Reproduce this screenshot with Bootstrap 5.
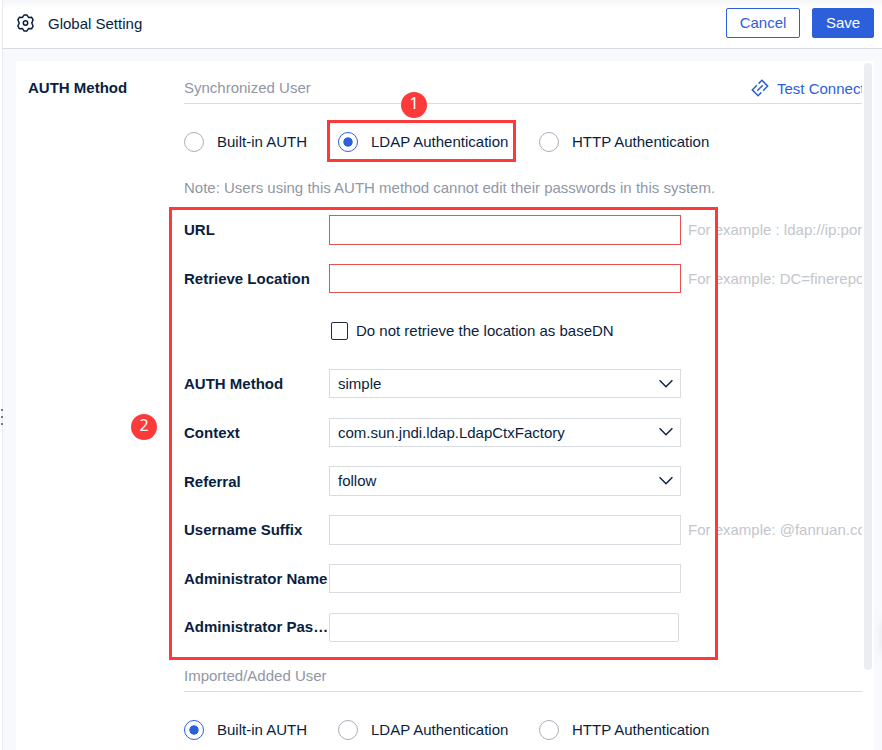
<!DOCTYPE html>
<html lang="en">
<head>
<meta charset="utf-8">
<meta name="viewport" content="width=device-width, initial-scale=1">
<title>Global Setting</title>
<link href="https://cdn.jsdelivr.net/npm/bootstrap@5.3.0/dist/css/bootstrap.min.css" rel="stylesheet">
<style>
body{font:15px/20px "Liberation Sans",Arial,sans-serif;color:#091e40;background:#fff;height:750px}
.shell{height:750px;margin-left:2px;border-left:1px solid #e9eaf0;background:#f8f9fd}
.topbar{height:49px;border-bottom:1px solid #d9dbe3;background:linear-gradient(#f5f6f8,#fff 9px);padding:0 8px 2px 13px}
.topbar .btn{height:30px;font-size:15px;line-height:20px;padding:4px 0;border-radius:2px}
.page-title{margin-left:13px;padding-top:2px}
.cancel-btn{width:74px;--bs-btn-color:#2c60db;--bs-btn-border-color:#2c60db;--bs-btn-bg:#fff}
.save-btn{width:62px;margin-left:12px;--bs-btn-bg:#2c60db;--bs-btn-border-color:#2c60db}
.panel{margin:12px 8px 0 13px;background:#fff;height:689px}
.side-title{width:168px;padding:17px 0 0 12px;flex:none}
.main-col{width:678px;flex:none;overflow:hidden;padding-top:17px}
.section-head{height:26px;border-bottom:1px solid #d9dbe3;color:#9097a5}
.section-head>*{white-space:nowrap}
.test-link{color:#2c60db;text-decoration:none;width:111px;flex:none;padding-top:1px}
.radio-row{margin-top:28px;height:20px}
.option{gap:13px;white-space:nowrap}
.option:nth-child(1){width:154px}
.option:nth-child(2){width:201px}
.option .form-check-input,.base-dn .form-check-input{margin:0;flex:none;box-shadow:none}
.option .form-check-input{width:20px;height:20px;border:1px solid #a9afbc}
.option .form-check-input:checked{background:radial-gradient(circle,#2c60db 4.3px,#fff 5px);border-color:#2c60db}
.note{color:#9097a5;margin-top:26px;white-space:nowrap}
.fields{display:grid;grid-template-columns:145px 352px 1fr;grid-template-rows:49px 49px 56px 49px 48px 49px 49px 49px 30px;margin-top:17px;align-items:start}
.fields label.name{font-weight:700;line-height:30px;white-space:nowrap;overflow:hidden;text-overflow:ellipsis}
.fields label.lower{line-height:32px}
.fields label.upper{line-height:28px}
.fields .box{height:29px;border:1px solid #d9dbe3;border-radius:0;padding:0 7px 0 8px;font:15px/27px "Liberation Sans",Arial,sans-serif;color:#091e40;background:#fff;box-shadow:none}
.fields .tall{height:30px}
.fields .bad{border-color:#e65251}
.fields .short{width:350px;border-radius:2px}
.fields .hint{color:#c3c6cd;line-height:30px;padding-left:7px;white-space:nowrap}
.base-dn{grid-column:2/4;padding:8px 0 0 2px;gap:8px}
.base-dn .form-check-input{width:17px;height:18px;border:1px solid #1a2c4c;border-radius:2px;position:relative;top:1px}
.second{margin-top:23px}
.scroller{width:8px;height:607px;margin:2px 2px 0 auto;border-radius:4px;background:#ecedf2}
.frame{position:absolute;border:3px solid #fc3a39;pointer-events:none}
.frame-a{left:327px;top:120px;width:189px;height:42px}
.frame-b{left:169px;top:207px;width:549px;height:453px}
.pin{position:absolute;width:26px;height:26px;border-radius:50%;background:#fc3a39;color:#fff;font:16px/23px "Noto Sans",sans-serif;text-align:center}
.pin-a{left:401px;top:92px}
.pin-b{left:131px;top:414px}
.grip{position:absolute;left:0;top:408px}
.edge{position:absolute;right:0;top:600px;width:12px;height:75px;overflow:hidden}
.edge::after{content:"";position:absolute;left:12px;top:20px;width:20px;height:35px;border-radius:10px;box-shadow:0 0 10px #9da3b340}
</style>
</head>
<body class="position-relative overflow-hidden">
<div class="shell">
  <header class="topbar d-flex align-items-center">
    <svg width="19" height="20" viewBox="0 0 19 20" fill="none" stroke="#091e40" stroke-width="1.5" stroke-linejoin="round"><path d="M8.200 1.900h2.600L12.500 4.400l3.200-.1 1.400 2.500L15.800 10l1.300 3.200-1.400 2.500-3.200-.1-1.700 2.500H8.200l-1.700-2.500-3.200.1-1.400-2.500L3.200 10 1.900 6.800l1.400-2.500 3.200.1z"/><circle cx="9.500" cy="10" r="2.200"/></svg>
    <span class="page-title me-auto">Global Setting</span>
    <button class="btn btn-outline-primary cancel-btn">Cancel</button>
    <button class="btn btn-primary save-btn">Save</button>
  </header>
  <main class="panel d-flex">
    <div class="side-title fw-bold">AUTH Method</div>
    <div class="main-col">
      <div class="section-head d-flex justify-content-between"><span>Synchronized User</span>
        <a class="test-link d-flex" href="#"><svg class="flex-shrink-0" width="18" height="18" viewBox="0 0 18 18" fill="none" stroke="#2c60db" stroke-width="1.5"><path d="M7.600 4.600 10.900 1.300l5.800 5.800-4.600 4.600M10.400 13.400l-3.300 3.300-5.800-5.800 4.600-4.600M6.200 11.800l5.600-5.600"/></svg><span class="ms-2">Test Connection</span></a></div>
      <div class="radio-row d-flex">
        <label class="option d-flex"><input class="form-check-input" type="radio" name="sync">Built-in AUTH</label>
        <label class="option d-flex"><input class="form-check-input" type="radio" name="sync" checked>LDAP Authentication</label>
        <label class="option d-flex"><input class="form-check-input" type="radio" name="sync">HTTP Authentication</label>
      </div>
      <div class="note">Note: Users using this AUTH method cannot edit their passwords in this system.</div>
      <div class="fields">
        <label class="name">URL</label><input class="form-control box tall bad"><span class="hint">For example : ldap://ip:port</span>
        <label class="name">Retrieve Location</label><input class="form-control box bad"><span class="hint">For example: DC=finereport</span>
        <span></span><label class="base-dn d-flex"><input class="form-check-input" type="checkbox">Do not retrieve the location as baseDN</label>
        <label class="name">AUTH Method</label><div class="box d-flex justify-content-between"><span>simple</span><svg width="14" height="27" viewBox="0 0 14 27" fill="none" stroke="#091e40" stroke-width="1.4"><path d="m.6 10.300 6.400 6.400 6.400-6.400"/></svg></div><span></span>
        <label class="name">Context</label><div class="box d-flex justify-content-between"><span>com.sun.jndi.ldap.LdapCtxFactory</span><svg width="14" height="27" viewBox="0 0 14 27" fill="none" stroke="#091e40" stroke-width="1.4"><path d="m.6 9.300 6.400 6.400 6.400-6.400"/></svg></div><span></span>
        <label class="name lower">Referral</label><div class="box tall d-flex justify-content-between"><span>follow</span><svg width="14" height="27" viewBox="0 0 14 27" fill="none" stroke="#091e40" stroke-width="1.4"><path d="m.6 10.300 6.400 6.400 6.400-6.400"/></svg></div><span></span>
        <label class="name">Username Suffix</label><input class="form-control box tall"><span class="hint">For example: @fanruan.com</span>
        <label class="name">Administrator Name</label><input class="form-control box"><span></span>
        <label class="name upper">Administrator Password</label><input class="form-control box short" type="password"><span></span>
      </div>
      <div class="section-head second">Imported/Added User</div>
      <div class="radio-row d-flex">
        <label class="option d-flex"><input class="form-check-input" type="radio" name="imp" checked>Built-in AUTH</label>
        <label class="option d-flex"><input class="form-check-input" type="radio" name="imp">LDAP Authentication</label>
        <label class="option d-flex"><input class="form-check-input" type="radio" name="imp">HTTP Authentication</label>
      </div>
    </div>
    <div class="scroller"></div>
  </main>
</div>
<svg class="grip" width="4" height="18" viewBox="0 0 4 18" fill="#5d7f9f"><path d="M1 1h2v2H1zM1 8h2v2H1zM1 15h2v2H1z"/></svg>
<div class="edge"></div>
<div class="frame frame-a"></div><div class="frame frame-b"></div>
<div class="pin pin-a">1</div><div class="pin pin-b">2</div>
<script src="https://cdn.jsdelivr.net/npm/bootstrap@5.3.0/dist/js/bootstrap.bundle.min.js"></script>
</body>
</html>
